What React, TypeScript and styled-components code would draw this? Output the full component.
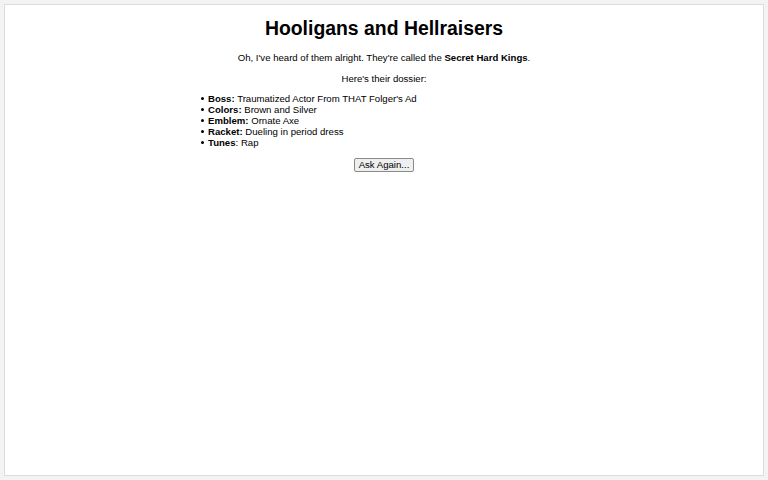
import React from "react";
import styled, { createGlobalStyle } from "styled-components";

const GlobalStyle = createGlobalStyle`
  html, body {
    margin: 0;
    padding: 0;
    background: #f3f3f3;
  }
  body {
    font-family: "Liberation Sans", Arial, sans-serif;
    color: #000;
  }
`;

const Page = styled.div`
  box-sizing: border-box;
  height: 480px;
  padding: 4px;
  display: flex;
`;

const Panel = styled.main`
  flex: 1;
  background: #fff;
  border: 1px solid #dcdcdc;
  display: flex;
  flex-direction: column;
  align-items: center;
`;

const Column = styled.div`
  width: 400px;
  display: flex;
  flex-direction: column;
  align-items: stretch;
  font-size: 9.6px;
`;

const Title = styled.h1`
  margin: 12px 0 12px;
  font-size: 19.4px;
  line-height: 23px;
  font-weight: bold;
  text-align: center;
`;

const Para = styled.p<{ $gap?: number }>`
  margin: 0 0 ${(p) => p.$gap ?? 10}px;
  text-align: center;
  line-height: 11px;
`;

const Dossier = styled.ul`
  margin: 0 0 10px;
  padding-left: 24px;
  line-height: 11px;
  list-style: none;
`;

const Entry = styled.li`
  &::before {
    content: "";
    display: inline-block;
    width: 3px;
    height: 3px;
    border-radius: 50%;
    background: #000;
    margin-left: -7px;
    margin-right: 4px;
    vertical-align: 2px;
  }
`;

const Label = styled.b`
  font-weight: bold;
`;

const Actions = styled.div`
  display: flex;
  justify-content: center;
`;

const Button = styled.button`
  font-family: "Liberation Sans", Arial, sans-serif;
  font-size: 9.6px;
  line-height: 12px;
  padding: 0 4px;
  background: #efefef;
  border: 1px solid #8a8a8a;
  border-radius: 2px;
  color: #000;
`;

const entries: [string, string][] = [
  ["Boss:", "Traumatized Actor From THAT Folger's Ad"],
  ["Colors:", "Brown and Silver"],
  ["Emblem:", "Ornate Axe"],
  ["Racket:", "Dueling in period dress"],
  ["Tunes", "Rap"],
];

export default function App() {
  return (
    <>
      <GlobalStyle />
      <Page>
        <Panel>
          <Column>
            <Title>Hooligans and Hellraisers</Title>
            <Para>
              Oh, I've heard of them alright. They're called the{" "}
              <Label>Secret Hard Kings</Label>.
            </Para>
            <Para $gap={9}>Here's their dossier:</Para>
            <Dossier>
              {entries.map(([k, v]) => (
                <Entry key={k}>
                  <Label>{k}</Label>
                  {k === "Tunes" ? ": " : " "}
                  {v}
                </Entry>
              ))}
            </Dossier>
            <Actions>
              <Button>Ask Again...</Button>
            </Actions>
          </Column>
        </Panel>
      </Page>
    </>
  );
}
